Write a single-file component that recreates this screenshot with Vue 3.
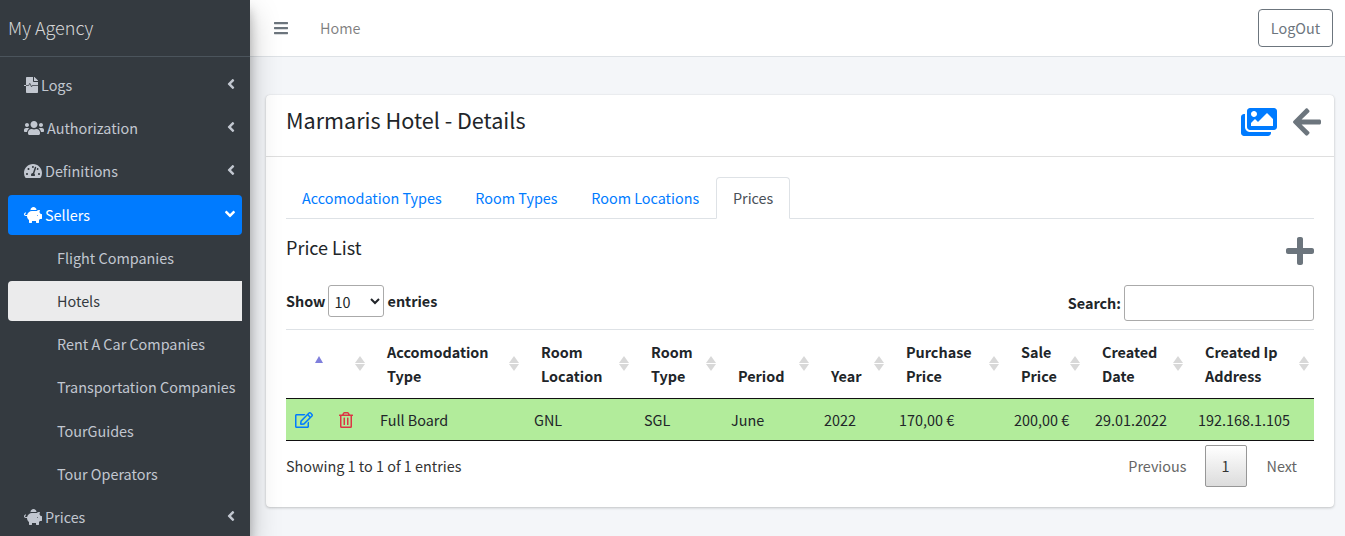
<script setup>
const P = {
  angle: 'M31.7 239l136-136c9.4-9.4 24.6-9.4 33.9 0l22.6 22.6c9.4 9.4 9.4 24.6 0 33.9L127.9 256l96.4 96.4c9.4 9.4 9.4 24.6 0 33.9L201.7 409c-9.4 9.4-24.6 9.4-33.9 0l-136-136c-9.5-9.4-9.5-24.6-.1-34z',
  users: 'M96 224c35.3 0 64-28.7 64-64s-28.7-64-64-64-64 28.7-64 64 28.7 64 64 64zm448 0c35.3 0 64-28.7 64-64s-28.7-64-64-64-64 28.7-64 64 28.7 64 64 64zm32 32h-64c-17.6 0-33.5 7.1-45.1 18.6 40.3 22.1 68.9 62 75.1 109.4h66c17.7 0 32-14.3 32-32v-32c0-35.3-28.7-64-64-64zm-256 0c61.9 0 112-50.1 112-112S381.9 32 320 32 208 82.1 208 144s50.1 112 112 112zm76.8 32h-8.3c-20.8 10-43.9 16-68.5 16s-47.6-6-68.5-16h-8.3C179.6 288 128 339.6 128 403.2V432c0 26.5 21.5 48 48 48h288c26.5 0 48-21.5 48-48v-28.8c0-63.6-51.6-115.2-115.2-115.2zm-223.7-13.4C161.5 263.1 145.6 256 128 256H64c-35.3 0-64 28.7-64 64v32c0 17.7 14.3 32 32 32h65.9c6.3-47.4 34.9-87.3 75.2-109.4z',
  gauge: 'M288 32C128.94 32 0 160.94 0 320c0 52.8 14.25 102.26 39.06 144.8 5.61 9.62 16.3 15.2 27.44 15.2h443c11.14 0 21.83-5.58 27.44-15.2C561.75 422.26 576 372.8 576 320c0-159.06-128.94-288-288-288zm0 64c14.71 0 26.58 10.13 30.32 23.65-1.11 2.26-2.64 4.23-3.45 6.67l-9.22 27.67c-5.13 3.49-10.97 6.01-17.64 6.01-17.67 0-32-14.33-32-32S270.33 96 288 96zM96 384c-17.67 0-32-14.33-32-32s14.33-32 32-32 32 14.33 32 32-14.33 32-32 32zm48-160c-17.67 0-32-14.33-32-32s14.33-32 32-32 32 14.33 32 32-14.33 32-32 32zm246.77-72.41l-61.33 184C343.13 347.33 352 364.54 352 384c0 11.72-3.38 22.55-8.88 32H232.88c-5.5-9.45-8.88-20.28-8.88-32 0-33.94 26.5-61.43 59.9-63.59l61.34-184.01c4.17-12.56 17.73-19.45 30.36-15.17 12.57 4.19 19.35 17.79 15.17 30.36zm14.66 57.2l15.52-46.55c3.47-1.29 7.13-2.23 11.05-2.23 17.67 0 32 14.33 32 32s-14.33 32-32 32c-11.38-.01-20.89-6.28-26.57-15.22zM480 384c-17.67 0-32-14.33-32-32s14.33-32 32-32 32 14.33 32 32-14.33 32-32 32z',
  piggy: 'M560 224h-29.5c-8.8-20-21.6-37.7-37.4-52.5L512 96h-32c-29.4 0-55.4 13.5-73 34.3-7.6-1.1-15.1-2.3-23-2.3H256c-77.4 0-141.9 55-156.8 128H56c-14.8 0-26.5-13.5-23.5-28.8C34.7 215.8 45.4 208 57 208h1c3.3 0 6-2.7 6-6v-20c0-3.3-2.7-6-6-6-28.5 0-53.9 20.4-57.5 48.6C-3.9 258.8 22.7 288 56 288h40c0 52.2 25.4 98.1 64 127.3V496c0 8.8 7.2 16 16 16h64c8.8 0 16-7.2 16-16v-48h128v48c0 8.8 7.2 16 16 16h64c8.8 0 16-7.2 16-16v-80.7c11.8-8.9 22.3-19.4 31.3-31.3H560c8.8 0 16-7.2 16-16V240c0-8.8-7.2-16-16-16zm-128 64c-8.8 0-16-7.2-16-16s7.2-16 16-16 16 7.2 16 16-7.2 16-16 16zM256 96h128c5.4 0 10.7.4 15.9.8 0-.3.1-.5.1-.8 0-53-43-96-96-96s-96 43-96 96c0 2.1.5 4.1.6 6.2 15.2-3.9 31-6.2 47.4-6.2z',
  bars: 'M16 132h416c8.837 0 16-7.163 16-16V76c0-8.837-7.163-16-16-16H16C7.163 60 0 67.163 0 76v40c0 8.837 7.163 16 16 16zm0 160h416c8.837 0 16-7.163 16-16v-40c0-8.837-7.163-16-16-16H16c-8.837 0-16 7.163-16 16v40c0 8.837 7.163 16 16 16zm0 160h416c8.837 0 16-7.163 16-16v-40c0-8.837-7.163-16-16-16H16c-8.837 0-16 7.163-16 16v40c0 8.837 7.163 16 16 16z',
  images: 'M480 416v16c0 26.51-21.49 48-48 48H48c-26.51 0-48-21.49-48-48V176c0-26.51 21.49-48 48-48h16v208c0 44.112 35.888 80 80 80h336zm96-80V80c0-26.51-21.49-48-48-48H144c-26.51 0-48 21.49-48 48v256c0 26.51 21.49 48 48 48h384c26.51 0 48-21.49 48-48zM256 128c0 26.51-21.49 48-48 48s-48-21.49-48-48 21.49-48 48-48 48 21.49 48 48zm-96 144l55.515-55.515c4.686-4.686 12.284-4.686 16.971 0L272 256l135.515-135.515c4.686-4.686 12.284-4.686 16.971 0L512 208v112H160v-48z',
  arrow: 'M257.5 445.1l-22.2 22.2c-9.4 9.4-24.6 9.4-33.9 0L7 273c-9.4-9.4-9.4-24.6 0-33.9L201.4 44.7c9.4-9.4 24.6-9.4 33.9 0l22.2 22.2c9.5 9.5 9.3 25-.4 34.3L136.6 216H424c13.3 0 24 10.7 24 24v32c0 13.3-10.7 24-24 24H136.6l120.5 114.8c9.8 9.3 10 24.8.4 34.3z',
  plus: 'M416 208H272V64c0-17.67-14.33-32-32-32h-32c-17.67 0-32 14.33-32 32v144H32c-17.67 0-32 14.33-32 32v32c0 17.67 14.33 32 32 32h144v144c0 17.67 14.33 32 32 32h32c17.67 0 32-14.33 32-32V304h144c17.67 0 32-14.33 32-32v-32c0-17.67-14.33-32-32-32z',
  edit: 'M402.3 344.9l32-32c5-5 13.7-1.5 13.7 5.7V464c0 26.5-21.5 48-48 48H48c-26.5 0-48-21.5-48-48V112c0-26.5 21.5-48 48-48h273.5c7.1 0 10.7 8.6 5.7 13.7l-32 32c-1.5 1.5-3.5 2.3-5.7 2.3H48v352h352V350.5c0-2.1.8-4.1 2.3-5.6zm156.600-201.800L296.300 405.700l-90.400 10c-26.200 2.900-48.500-19.200-45.600-45.600l10-90.400L432.900 17.100c22.900-22.900 59.900-22.900 82.700 0l43.200 43.200c22.900 22.900 22.900 60 .1 82.800zM460.100 174L402 115.900 216.200 301.800l-7.300 65.300 65.300-7.300L460.100 174zm64.800-79.700l-43.200-43.200c-4.100-4.100-10.800-4.100-14.800 0L436 82l58.100 58.100 30.900-30.900c4-4.200 4-10.800-.1-14.900z',
  trash: 'M268 416h24a12 12 0 0 0 12-12V188a12 12 0 0 0-12-12h-24a12 12 0 0 0-12 12v216a12 12 0 0 0 12 12zM432 80h-82.41l-34-56.7A48 48 0 0 0 274.41 0H173.59a48 48 0 0 0-41.16 23.3L98.41 80H16A16 16 0 0 0 0 96v16a16 16 0 0 0 16 16h16v336a48 48 0 0 0 48 48h288a48 48 0 0 0 48-48V128h16a16 16 0 0 0 16-16V96a16 16 0 0 0-16-16zM171.84 50.91A6 6 0 0 1 177 48h94a6 6 0 0 1 5.15 2.91L293.61 80H154.39zM368 464H80V128h288zm-212-48h24a12 12 0 0 0 12-12V188a12 12 0 0 0-12-12h-24a12 12 0 0 0-12 12v216a12 12 0 0 0 12 12z',
  file: 'M288 136V0H88C74.7 0 64 10.7 64 24v232H8c-4.4 0-8 3.6-8 8v16c0 4.4 3.6 8 8 8h56v200c0 13.3 10.7 24 24 24h336c13.3 0 24-10.7 24-24V160H312c-13.2 0-24-10.8-24-24zM448 121.900c0-6.300-2.500-12.400-7-16.900L343.100 7c-4.500-4.500-10.600-7-17-7H320v128h128v-6.100z',
}

const topNav = [
  { label: 'Logs', icon: 'file', vb: '0 0 448 512', w: 14, pulse: true },
  { label: 'Authorization', icon: 'users', vb: '0 0 640 512', w: 20 },
  { label: 'Definitions', icon: 'gauge', vb: '0 0 576 512', w: 18 },
]
const subNav = ['Flight Companies', 'Hotels', 'Rent A Car Companies', 'Transportation Companies', 'TourGuides', 'Tour Operators']
const tabs = ['Accomodation Types', 'Room Types', 'Room Locations', 'Prices']
const columns = [
  { w: 44, label: '', sort: 'asc' },
  { w: 42, label: '' },
  { w: 154, label: 'Accomodation Type' },
  { w: 110, label: 'Room Location' },
  { w: 87, label: 'Room Type' },
  { w: 93, label: 'Period' },
  { w: 75, label: 'Year' },
  { w: 115, label: 'Purchase Price' },
  { w: 81, label: 'Sale Price' },
  { w: 103, label: 'Created Date' },
  { w: 124, label: 'Created Ip Address' },
]
const row = ['Full Board', 'GNL', 'SGL', 'June', '2022', '170,00 €', '200,00 €', '29.01.2022', '192.168.1.105']
</script>

<template>
  <div class="app">
    <aside class="sidebar">
      <div class="brand">My Agency</div>
      <nav class="nav">
        <a v-for="item in topNav" :key="item.label" class="nav-link">
          <svg class="nav-icon" :style="{ width: item.w + 'px' }" :viewBox="item.vb"><path :d="P[item.icon]" fill="currentColor" /><path v-if="item.pulse" d="M64 272h85l35-70 57 114 22-44h185" fill="none" stroke="#343a40" stroke-width="24" /></svg>
          <span>{{ item.label }}</span>
          <svg class="caret" viewBox="0 0 256 512"><path :d="P.angle" fill="currentColor" /></svg>
        </a>
        <a class="nav-link active">
          <svg class="nav-icon w18" viewBox="0 0 576 512"><path :d="P.piggy" fill="currentColor" /></svg>
          <span>Sellers</span>
          <svg class="caret open" viewBox="0 0 256 512"><path :d="P.angle" fill="currentColor" /></svg>
        </a>
        <a v-for="s in subNav" :key="s" class="nav-link sub" :class="{ current: s === 'Hotels' }">{{ s }}</a>
        <a class="nav-link">
          <svg class="nav-icon w18" viewBox="0 0 576 512"><path :d="P.piggy" fill="currentColor" /></svg>
          <span>Prices</span>
          <svg class="caret" viewBox="0 0 256 512"><path :d="P.angle" fill="currentColor" /></svg>
        </a>
      </nav>
    </aside>

    <div class="main">
      <header class="navbar">
        <svg class="bars" viewBox="0 0 448 512"><path :d="P.bars" fill="currentColor" /></svg>
        <a class="home">Home</a>
        <button class="logout">LogOut</button>
      </header>

      <section class="content">
        <div class="card">
          <div class="card-header">
            <h3 class="title">Marmaris Hotel - Details</h3>
            <svg class="icon-images" viewBox="0 0 576 512"><path :d="P.images" fill="currentColor" /></svg>
            <svg class="icon-grey" viewBox="0 0 448 512"><path :d="P.arrow" fill="currentColor" /></svg>
          </div>
          <div class="card-body">
            <ul class="tabs">
              <li v-for="t in tabs" :key="t" class="tab" :class="{ on: t === 'Prices' }">{{ t }}</li>
            </ul>
            <div class="list-head">
              <h5 class="list-title">Price List</h5>
              <svg class="icon-grey" viewBox="0 0 448 512"><path :d="P.plus" fill="currentColor" /></svg>
            </div>
            <div class="toolbar">
              <label class="lbl">Show
                <select class="length"><option>10</option><option>25</option></select>
                entries</label>
              <label class="lbl search">Search: <input class="search-input" type="text" /></label>
            </div>
            <table class="grid">
              <colgroup><col v-for="(c, i) in columns" :key="i" :style="{ width: c.w + 'px' }" /></colgroup>
              <thead>
                <tr>
                  <th v-for="(c, i) in columns" :key="i">
                    {{ c.label }}
                    <span class="sort">
                      <i class="up" :class="{ asc: c.sort }"></i>
                      <i v-if="!c.sort" class="down"></i>
                    </span>
                  </th>
                </tr>
              </thead>
              <tbody>
                <tr>
                  <td class="act"><svg class="ic blue" viewBox="0 0 576 512"><path :d="P.edit" fill="currentColor" /></svg></td>
                  <td class="act"><svg class="ic red" viewBox="0 0 448 512"><path :d="P.trash" fill="currentColor" /></svg></td>
                  <td v-for="v in row" :key="v">{{ v }}</td>
                </tr>
              </tbody>
            </table>
            <div class="foot">
              <div class="info">Showing 1 to 1 of 1 entries</div>
              <div class="pager">
                <a class="pg">Previous</a>
                <a class="pg cur">1</a>
                <a class="pg next">Next</a>
              </div>
            </div>
          </div>
        </div>
      </section>
    </div>
  </div>
</template>

<style>
html, body { margin: 0; height: 100%; overflow: hidden; }
</style>

<style scoped>
.app {
  display: flex;
  height: 536px;
  overflow: hidden;
  font-family: "Noto Sans CJK JP", "Noto Sans", sans-serif;
  font-size: 14.4px;
  line-height: 24px;
  color: #212529;
  background: #f4f6f9;
}
.sidebar {
  flex: 0 0 250px;
  min-width: 0;
  background: #343a40;
  box-shadow: 0 14px 28px rgba(0,0,0,.25), 0 10px 10px rgba(0,0,0,.22);
  position: relative;
  z-index: 2;
}
.brand {
  height: 56px;
  box-sizing: content-box;
  border-bottom: 1px solid #4b545c;
  padding-left: 8px;
  font-size: 18px;
  line-height: 55px;
  font-weight: 300;
  color: rgba(255,255,255,.8);
}
.nav { padding: 8px 8px 0; }
.nav-link {
  display: flex;
  align-items: center;
  height: 40px;
  margin-bottom: 3.2px;
  padding: 0 16px;
  box-sizing: border-box;
  border-radius: 4px 0 0 4px;
  color: #c2c7d0;
  white-space: nowrap;
  position: relative;
}
.nav-icon { height: 16px; margin-right: 3px; flex: none; }
.nav-icon.w18 { width: 18px; }
.caret { position: absolute; right: 7px; top: 11px; width: 8px; height: 16px; }
.caret.open { transform: rotate(-90deg); top: 11px; right: 8px; }
.active { background: #007bff; color: #fff; border-radius: 4px; }
.sub { padding-left: 49px; }
.current { background: rgba(255,255,255,.9); color: #343a40; }

.main { flex: 1; min-width: 0; display: flex; flex-direction: column; }
.navbar {
  height: 56px;
  flex: none;
  box-sizing: content-box;
  background: #fff;
  border-bottom: 1px solid #dee2e6;
  display: flex;
  align-items: center;
  padding: 0 12px 0 24px;
}
.bars { width: 14px; height: 16px; color: #6c757d; }
.home { margin-left: 32px; color: rgba(0,0,0,.5); }
.logout {
  margin-left: auto;
  height: 38px;
  width: 75px;
  padding: 0;
  background: #fff;
  border: 1px solid #6c757d;
  border-radius: 4px;
  color: #6c757d;
  font: inherit;
}
.content { padding: 38px 11px 0 16px; }
.card {
  background: #fff;
  border-radius: 4px;
  box-shadow: 0 0 1px rgba(0,0,0,.125), 0 1px 3px rgba(0,0,0,.2);
}
.card-header {
  display: flex;
  align-items: center;
  padding: 11px 13px 18px 20px;
  border-bottom: 1px solid rgba(0,0,0,.125);
}
.title { margin: -4px auto 0 0; font-size: 21.6px; font-weight: 400; line-height: 30px; color: #212529; }
.icon-images { width: 36px; height: 32px; color: #007bff; margin-right: 16px; }
.icon-grey { width: 28px; height: 32px; color: #6c757d; flex: none; }
.card-body { padding: 20px; }
.tabs {
  display: flex;
  list-style: none;
  margin: 0;
  padding: 0;
  border-bottom: 1px solid #dee2e6;
  height: 41px;
}
.tab {
  height: 42px;
  box-sizing: border-box;
  padding: 8px 16px;
  border: 1px solid transparent;
  border-radius: 4px 4px 0 0;
  color: #007bff;
  margin-right: -.3px;
}
.tab:first-child { margin-left: -1px; }
.tab.on { color: #495057; background: #fff; border-color: #dee2e6 #dee2e6 #fff; }
.list-head { display: flex; justify-content: space-between; align-items: center; margin-top: 16px; }
.list-title { margin: 0 0 8px; font-size: 18px; font-weight: 400; line-height: 24px; }
.toolbar { display: flex; justify-content: space-between; align-items: flex-start; margin-top: 18px; height: 36px; }
.lbl { font-weight: 700; line-height: 32px; display: inline-flex; align-items: center; gap: 2px; }
.search { line-height: 36px; gap: 3px; }
.length {
  width: 56px;
  height: 32px;
  margin-right: 2px;
  padding: 0 0 0 2px;
  background: #fff;
  border: 1px solid #aaa;
  border-radius: 3px;
  font: 400 14.4px "Noto Sans CJK JP", sans-serif;
  color: #212529;
}
.search-input {
  width: 190px;
  height: 36px;
  box-sizing: border-box;
  border: 1px solid #aaa;
  border-radius: 3px;
  padding: 0 8px;
  background: #fff;
}
.grid {
  width: 100%;
  table-layout: fixed;
  border-collapse: separate;
  border-spacing: 0;
  margin-top: 8px;
  border-top: 1px solid #dee2e6;
}
.grid th {
  position: relative;
  box-sizing: border-box;
  text-align: left;
  vertical-align: bottom;
  font-weight: 700;
  padding: 10px 30px 10px 15px;
  border-bottom: 1px solid #111;
}
.sort { position: absolute; right: 7px; top: 26px; display: flex; flex-direction: column; gap: 1px; align-items: center; }
th:last-child .sort { right: 5px; }
.up, .down { display: block; width: 0; height: 0; border-left: 5px solid transparent; border-right: 5px solid transparent; }
.up { border-bottom: 7px solid #d8d8d8; }
.down { border-top: 7px solid #d8d8d8; }
.up.asc { border-bottom-color: #7f7fdc; border-left-width: 4.5px; border-right-width: 4.5px; }
.grid td {
  background: #b2ec9b;
  padding: 9px 8px 8px;
  border-bottom: 1px solid #111;
  white-space: nowrap;
  color: #212529;
  height: 24px;
}
.grid td.act { padding-left: 9px; }
.ic { display: block; height: 16px; }
.ic.blue { width: 18px; color: #007bff; }
.ic.red { width: 14px; color: #dc3545; }
.foot { display: flex; justify-content: space-between; margin-top: 4px; }
.info { padding-top: 9px; color: #333; }
.pager { display: flex; }
.pg {
  box-sizing: border-box;
  height: 42px;
  padding: 8px 16px;
  border: 1px solid transparent;
  border-radius: 2px;
  color: #666;
}
.pg.next { margin-left: 1px; }
.pg.cur {
  margin: 0 2px 0 1px;
  color: #333;
  border-color: #979797;
  background: linear-gradient(to bottom, #fff 0%, #dcdcdc 100%);
}
</style>
